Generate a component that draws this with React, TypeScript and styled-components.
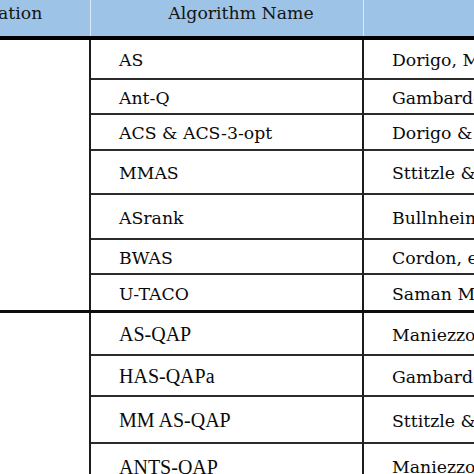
import React from "react";
import styled, { createGlobalStyle } from "styled-components";

const GlobalStyle = createGlobalStyle`
  html, body {
    margin: 0;
    padding: 0;
    background: #ffffff;
  }
`;

type Face = "georgia" | "times";

type Entry = { name: string; nameFace?: Face; source: string; height: number };

type Group = { label: string; rows: Entry[] };

const groups: Group[] = [
  {
    label: "",
    rows: [
      { name: "AS", source: "Dorigo, Maniezzo & Colorni", height: 40 },
      { name: "Ant-Q", source: "Gambardella & Dorigo", height: 35 },
      { name: "ACS & ACS-3-opt", source: "Dorigo & Gambardella", height: 36 },
      { name: "MMAS", source: "Sttitzle & Hoos", height: 44 },
      { name: "ASrank", source: "Bullnheimer, Hartl & Strauss", height: 45 },
      { name: "BWAS", source: "Cordon, et al.", height: 35 },
      { name: "U-TACO", source: "Saman Mohammadi", height: 35 },
    ],
  },
  {
    label: "",
    rows: [
      { name: "AS-QAP", nameFace: "times", source: "Maniezzo, Colorni & Dorigo", height: 43 },
      { name: "HAS-QAPa", nameFace: "times", source: "Gambardella, Taillard & Dorigo", height: 41 },
      { name: "MM AS-QAP", nameFace: "times", source: "Sttitzle & Hoos", height: 47 },
      { name: "ANTS-QAP", nameFace: "times", source: "Maniezzo", height: 44 },
    ],
  },
];

const Page = styled.div`
  width: 474px;
  height: 474px;
  overflow: hidden;
  background: #ffffff;
`;

const Sheet = styled.div`
  width: 800px;
  margin-left: -105px;
  color: #0a0a0a;
`;

const Columns = styled.div`
  display: grid;
  grid-template-columns: 196px 273px 331px;
`;

const HeaderRow = styled(Columns)`
  height: 36px;
  background: #9dc3e6;
  border-bottom: 4px solid #000000;
`;

const HeadCell = styled.div<{ $shift?: number }>`
  padding-top: 3px;
  padding-left: ${(p) => p.$shift ?? 0}px;
  text-align: center;
  font-family: "DejaVu Serif", Georgia, serif;
  font-size: 17.3px;
  line-height: 20px;
  color: #141414;
  border-right: 1px solid #dbe8f5;
  white-space: nowrap;
`;

const GroupBlock = styled(Columns)<{ $last?: boolean }>`
  border-bottom: ${(p) => (p.$last ? "none" : "3px solid #0d0d0d")};
`;

const GroupLabel = styled.div<{ $span: number }>`
  grid-column: 1;
  grid-row: 1 / span ${(p) => p.$span};
  border-right: 2px solid #1c1c1c;
`;

const Cell = styled.div<{ $h: number; $face: Face; $edge: boolean }>`
  height: ${(p) => p.$h}px;
  box-sizing: border-box;
  display: flex;
  align-items: center;
  padding-left: 28px;
  padding-top: 2px;
  font-family: ${(p) =>
    p.$face === "times"
      ? '"Liberation Serif", "Times New Roman", serif'
      : '"DejaVu Serif", Georgia, serif'};
  font-size: ${(p) => (p.$face === "times" ? "20px" : "17.3px")};
  white-space: nowrap;
  overflow: hidden;
  border-bottom: ${(p) => (p.$edge ? "none" : "2px solid #2b2b2b")};
`;

const NameCell = styled(Cell)`
  grid-column: 2;
  border-right: 2px solid #1c1c1c;
`;

const SourceCell = styled(Cell)`
  grid-column: 3;
`;

export default function App() {
  return (
    <>
      <GlobalStyle />
      <Page>
        <Sheet>
          <HeaderRow>
            <HeadCell>Application</HeadCell>
            <HeadCell $shift={28}>Algorithm Name</HeadCell>
            <HeadCell />
          </HeaderRow>
          {groups.map((g, gi) => (
            <GroupBlock key={gi} $last={gi === groups.length - 1}>
              <GroupLabel $span={g.rows.length}>{g.label}</GroupLabel>
              {g.rows.map((r, ri) => {
                const edge = ri === g.rows.length - 1;
                return (
                  <React.Fragment key={r.name}>
                    <NameCell
                      style={{ gridRow: ri + 1 }}
                      $h={r.height}
                      $face={r.nameFace ?? "georgia"}
                      $edge={edge}
                    >
                      {r.name}
                    </NameCell>
                    <SourceCell
                      style={{ gridRow: ri + 1 }}
                      $h={r.height}
                      $face="georgia"
                      $edge={edge}
                    >
                      {r.source}
                    </SourceCell>
                  </React.Fragment>
                );
              })}
            </GroupBlock>
          ))}
        </Sheet>
      </Page>
    </>
  );
}
